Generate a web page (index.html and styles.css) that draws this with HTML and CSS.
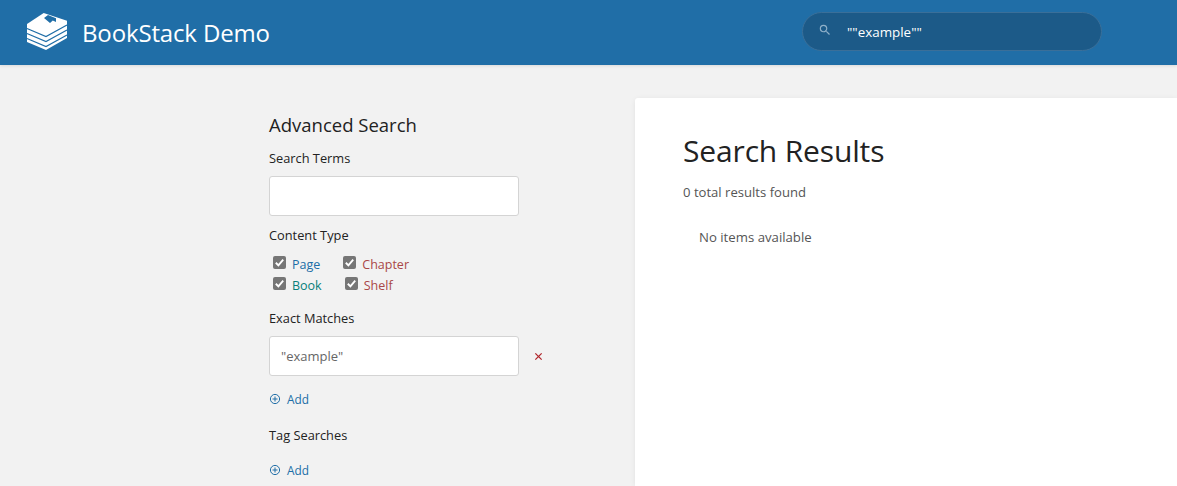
FILE: index.html
```html
<!DOCTYPE html>
<html lang="en">
<head>
<meta charset="utf-8">
<title>Search Results | BookStack Demo</title>
<link rel="stylesheet" href="styles.css">
</head>
<body>
<header class="header">
  <a class="brand" href="#">
    <svg class="logo" viewBox="0 0 42 38" aria-hidden="true">
      <path class="logo-fill" d="M1 12 17.700 1 41 8.700V26L20 38 1 30z"/>
      <path class="logo-mark" d="M18 6l4-3 8 3.200V10l-3.200-1.500L24 11z"/>
      <path class="logo-line" d="M1 16.500 20 24.500 41 13M1 21.500 20 29.500 41 18M1 26.500 20 34.500 41 23"/>
    </svg>
    <span class="brand-name">BookStack Demo</span>
  </a>
  <div class="search">
    <svg class="search-icon" viewBox="0 0 24 24" aria-hidden="true"><path d="M15.500 14h-.79l-.28-.27A6.470 6.470 0 0 0 16 9.500 6.500 6.500 0 1 0 9.500 16c1.610 0 3.090-.59 4.230-1.570l.27.28v.79l5 4.990L20.490 19l-4.990-5zm-6 0C7.010 14 5 11.990 5 9.500S7.010 5 9.500 5 14 7.010 14 9.500 11.990 14 9.500 14z"/></svg>
    <span class="search-text">""example""</span>
  </div>
</header>
<main class="layout">
  <aside class="sidebar">
    <h2 class="side-title">Advanced Search</h2>
    <h3 class="label">Search Terms</h3>
    <div class="field"></div>
    <h3 class="label label-type">Content Type</h3>
    <div class="checks">
      <div class="check-row">
        <label class="check"><span class="box"><svg viewBox="0 0 14 14"><path d="M3 7.300l2.800 2.700L11 4"/></svg></span><span class="c-page">Page</span></label>
        <label class="check"><span class="box"><svg viewBox="0 0 14 14"><path d="M3 7.300l2.800 2.700L11 4"/></svg></span><span class="c-chapter">Chapter</span></label>
      </div>
      <div class="check-row">
        <label class="check"><span class="box"><svg viewBox="0 0 14 14"><path d="M3 7.300l2.800 2.700L11 4"/></svg></span><span class="c-book">Book</span></label>
        <label class="check"><span class="box"><svg viewBox="0 0 14 14"><path d="M3 7.300l2.800 2.700L11 4"/></svg></span><span class="c-shelf">Shelf</span></label>
      </div>
    </div>
    <h3 class="label label-exact">Exact Matches</h3>
    <div class="field-row">
      <div class="field field-text">"example"</div>
      <svg class="remove" viewBox="0 0 10 10" aria-hidden="true"><path d="M1.500 1.500l7 7M8.500 1.500l-7 7"/></svg>
    </div>
    <a class="add add-first" href="#"><svg class="add-icon" viewBox="0 0 12 12" aria-hidden="true"><circle cx="6" cy="6" r="4.600"/><path d="M6 3.500v5M3.500 6h5"/></svg>Add</a>
    <h3 class="label label-tag">Tag Searches</h3>
    <a class="add add-second" href="#"><svg class="add-icon" viewBox="0 0 12 12" aria-hidden="true"><circle cx="6" cy="6" r="4.600"/><path d="M6 3.500v5M3.500 6h5"/></svg>Add</a>
  </aside>
  <section class="card">
    <h1 class="title">Search Results</h1>
    <p class="total">0 total results found</p>
    <p class="empty">No items available</p>
  </section>
</main>
</body>
</html>
```
FILE: styles.css
```css
* { box-sizing: border-box; }
html, body { margin: 0; height: 100%; overflow: hidden; }
body {
  background: #f2f2f2;
  color: #444;
  font-family: "Open Sans", "Noto Sans", sans-serif;
  font-size: 13px;
}
a { text-decoration: none; }
.header {
  height: 65px;
  background: #206ea7;
  box-shadow: 0 1px 3px rgba(0,0,0,.1);
  display: flex;
  align-items: center;
  justify-content: space-between;
  padding: 0 75px 0 26px;
}
.brand { display: flex; align-items: center; gap: 14px; color: #fff; }
.logo { width: 42px; height: 38px; display: block; margin-top: -3px; }
.logo-fill { fill: #fff; }
.logo-mark { fill: #206ea7; }
.logo-line { fill: none; stroke: #206ea7; stroke-width: 1.200; }
.brand-name { font-size: 24px; line-height: 1; letter-spacing: -.15px; }
.search {
  width: 300px;
  height: 39px;
  margin-top: -3px;
  border-radius: 20px;
  background: #1c5a88;
  border: 1px solid #3a6f99;
  display: flex;
  align-items: center;
  padding-left: 15px;
  color: #fff;
}
.search-icon { width: 14px; height: 14px; fill: #8fb0c9; margin-right: 15px; margin-top: -2px; }
.search-text { font-size: 13.400px; margin-top: 2px; }
.layout {
  display: grid;
  grid-template-columns: 635px 1fr;
  height: 421px;
}
.sidebar { padding: 47px 0 0 269px; }
.side-title { margin: 0; font-size: 18.500px; line-height: 26px; font-weight: 400; color: #222; }
.label { margin: 0; font-size: 12.800px; line-height: 18px; font-weight: 400; color: #222; }
.side-title + .label { margin-top: 11px; }
.field {
  width: 250px;
  height: 40px;
  margin-top: 9px;
  background: #fff;
  border: 1px solid #d4d4d4;
  border-radius: 3px;
}
.label-type { margin-top: 10px; }
.checks { margin-top: 11px; padding-left: 4px; display: flex; flex-direction: column; gap: 3px; }
.check-row { display: flex; height: 18px; }
.check { display: flex; align-items: center; gap: 6px; font-size: 12.500px; margin-right: 23px; }
.box {
  width: 13px;
  height: 13px;
  border-radius: 2px;
  background: #767676;
  display: block;
  margin-top: -3px;
}
.box svg { display: block; width: 13px; height: 13px; fill: none; stroke: #fff; stroke-width: 2; }
.c-page { color: #206ea7; }
.c-chapter { color: #a94747; }
.c-book { color: #077f7a; }
.c-shelf { color: #a94747; }
.label-exact { margin-top: 15px; }
.field-row { display: flex; align-items: center; margin-top: 9px; }
.field-row .field { margin-top: 0; }
.field-text { padding: 0 11px; line-height: 38px; font-size: 13px; color: #666; }
.remove { width: 9px; height: 9px; margin-left: 15px; fill: none; stroke-width: 1.400; stroke: #b0252b; }
.add { display: flex; align-items: center; gap: 6px; color: #206ea7; font-size: 11.800px; line-height: 18px; }
.add-icon { width: 12px; height: 12px; fill: none; stroke: #206ea7; stroke-width: 1; }
.add-first { margin-top: 14px; }
.label-tag { margin-top: 18px; }
.add-second { margin-top: 17px; }
.card {
  background: #fff;
  margin-top: 33px;
  padding: 31px 48px;
  box-shadow: 0 1px 6px -1px rgba(0,0,0,.1);
  border-radius: 3px 0 0 0;
}
.title { margin: 0; font-size: 30px; line-height: 44px; font-weight: 400; color: #222; letter-spacing: -.15px; }
.total { margin: 10px 0 0; font-size: 13.100px; line-height: 18px; color: #555; }
.empty { margin: 27px 0 0 16px; font-size: 13.200px; line-height: 18px; color: #555; }
```
